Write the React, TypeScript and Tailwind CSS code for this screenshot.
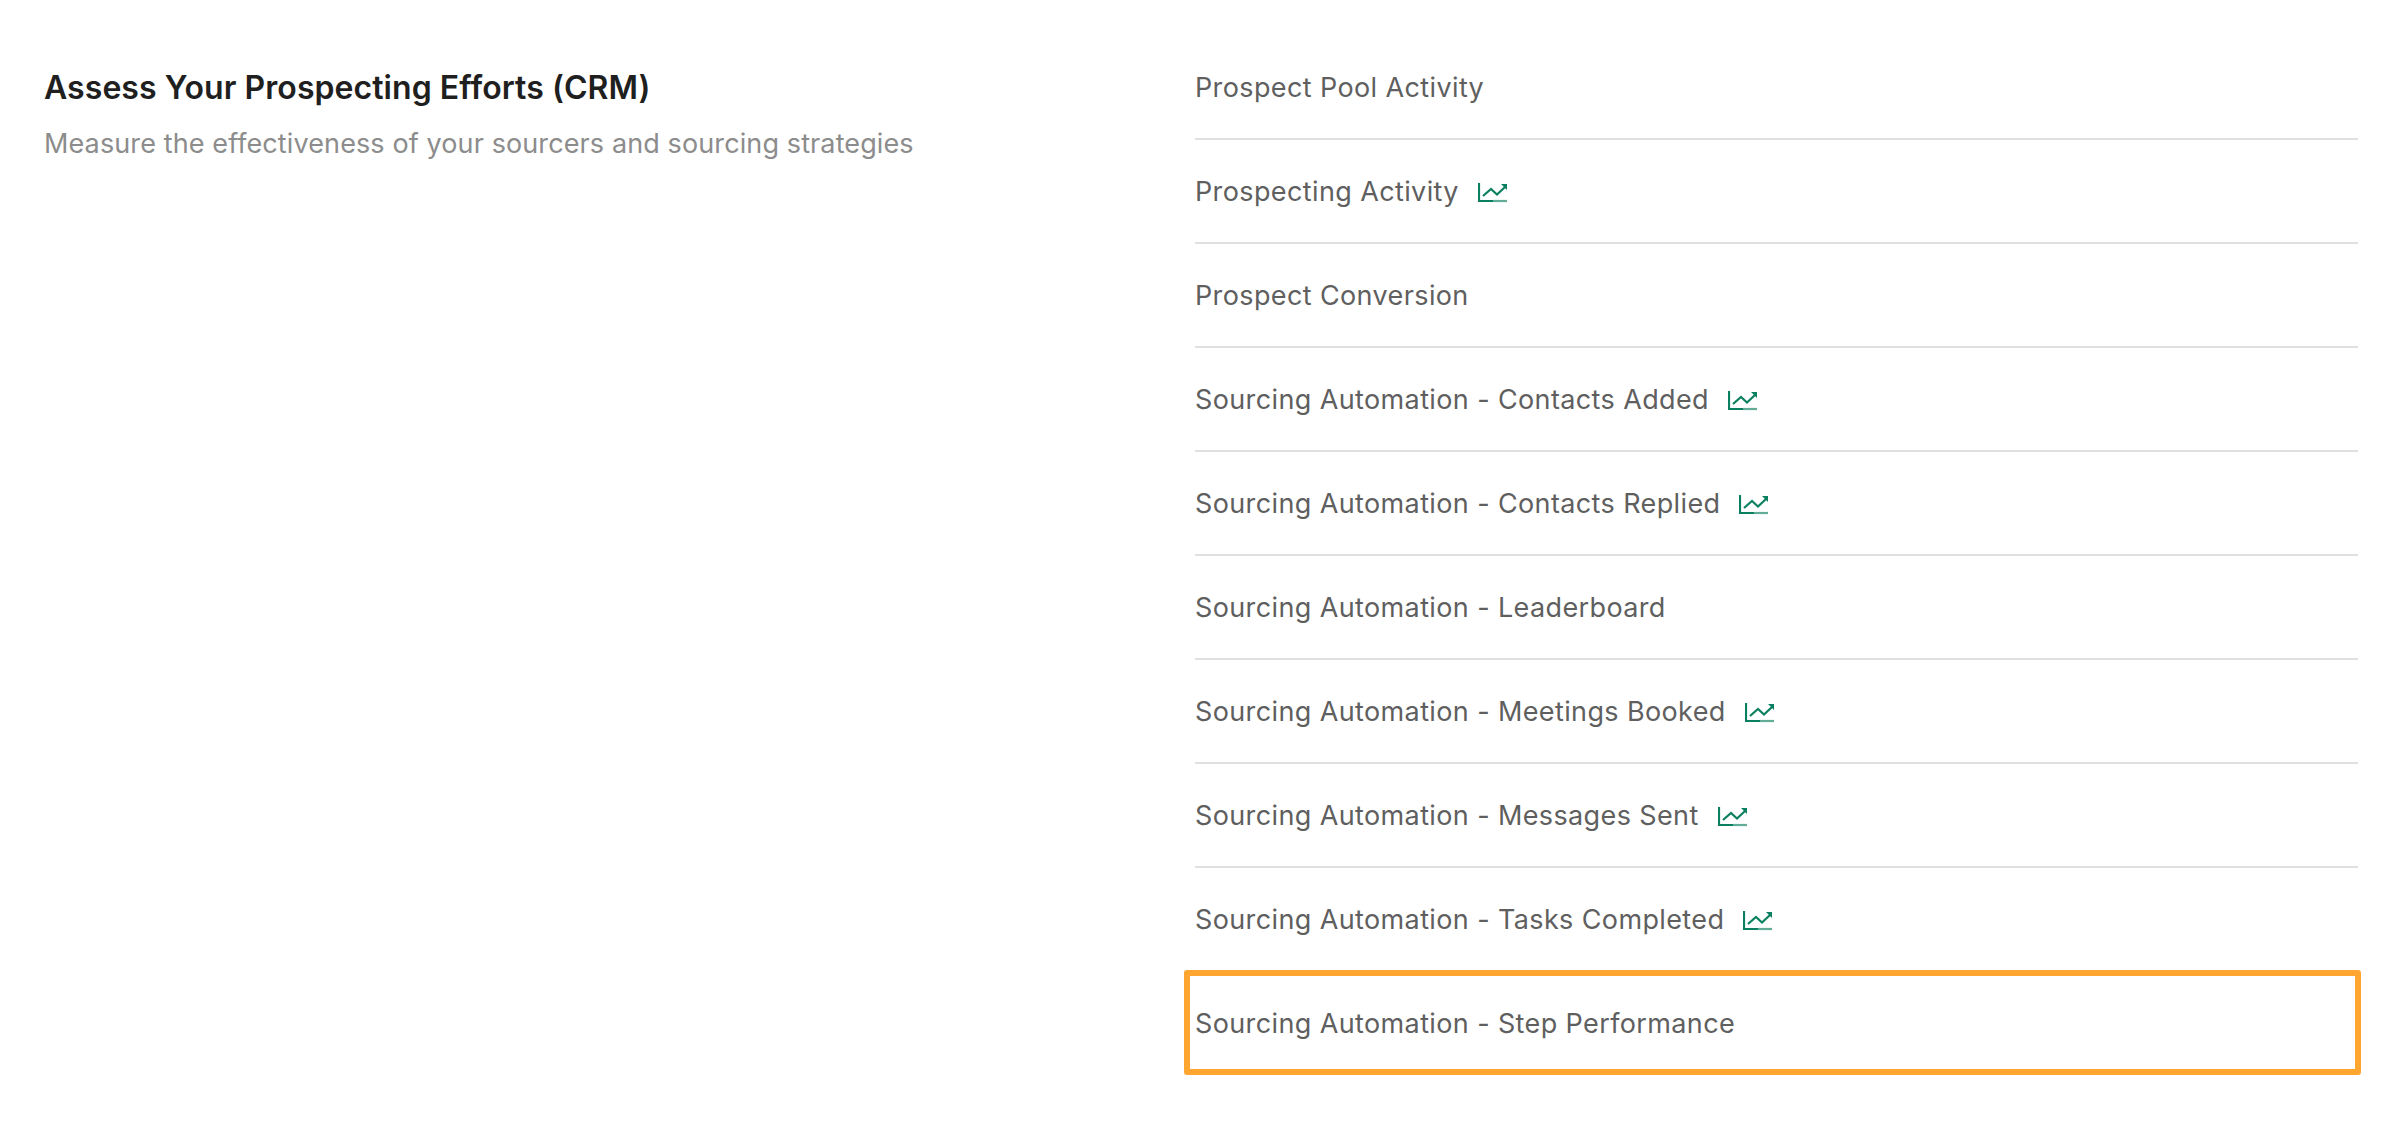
const rows = [
  { label: "Prospect Pool Activity", trend: false },
  { label: "Prospecting Activity", trend: true },
  { label: "Prospect Conversion", trend: false },
  { label: "Sourcing Automation - Contacts Added", trend: true },
  { label: "Sourcing Automation - Contacts Replied", trend: true },
  { label: "Sourcing Automation - Leaderboard", trend: false },
  { label: "Sourcing Automation - Meetings Booked", trend: true },
  { label: "Sourcing Automation - Messages Sent", trend: true },
  { label: "Sourcing Automation - Tasks Completed", trend: true },
];

function TrendIcon() {
  return (
    <svg width="30" height="20" viewBox="0 0 30 20" fill="none" className="ml-[19px] shrink-0 text-[#0b8060]">
      <path d="M1 0V18H15" stroke="currentColor" strokeWidth="2.2" />
      <path d="M15 18H29" stroke="currentColor" strokeWidth="2.2" strokeOpacity="0.65" />
      <path d="M5 13L13 6L19 11.5L27 4" stroke="currentColor" strokeWidth="2.2" />
      <path d="M23 1H29V7Z" fill="currentColor" />
    </svg>
  );
}

export default function App() {
  return (
    <div className="w-[2402px] h-[1136px] bg-white font-['Inter',sans-serif] flex px-[44px] overflow-hidden">
      <div className="w-[1151px] shrink-0 pt-[69px]">
        <h2 className="text-[32px] leading-[38px] font-semibold tracking-[0.06px] text-[#1f1f1f]">Assess Your Prospecting Efforts (CRM)</h2>
        <p className="mt-[18px] text-[27px] leading-[38px] tracking-[0.11px] text-[#8c8c8c]">Measure the effectiveness of your sourcers and sourcing strategies</p>
      </div>
      <div className="flex-1 pt-[36px]">
        {rows.map((row) => (
          <div key={row.label} className="h-[104px] pt-[3px] flex items-center border-b-2 border-[#e0e0e0] text-[27px] tracking-[0.38px] text-[#5f5f5f]">
            <span>{row.label}</span>
            {row.trend && <TrendIcon />}
          </div>
        ))}
        <div className="h-[105px] mt-[-2px] ml-[-11px] mr-[-3px] pl-[5px] pt-[4px] flex items-center border-[6px] border-[#ffa530] rounded-[3px] text-[27px] tracking-[0.38px] text-[#5f5f5f]">
          Sourcing Automation - Step Performance
        </div>
      </div>
    </div>
  );
}
